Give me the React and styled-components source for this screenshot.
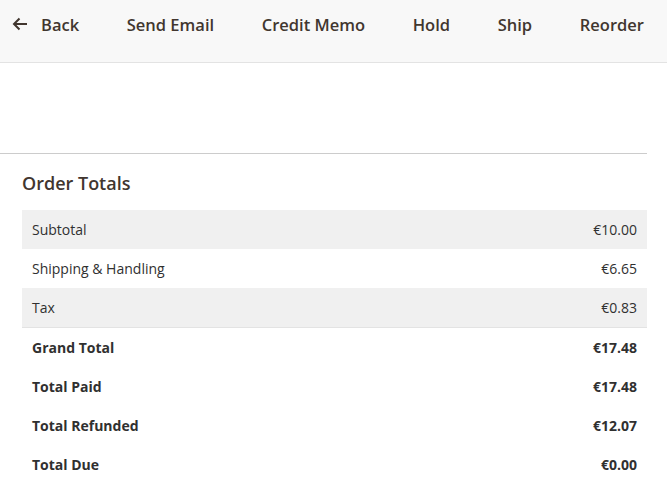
import React from "react"
import styled, { createGlobalStyle } from "styled-components"

const GlobalStyle = createGlobalStyle`
  body {
    margin: 0;
    background: #fff;
    font-family: "Open Sans", "Noto Sans", sans-serif;
    color: #41362f;
  }
`

const Toolbar = styled.nav`
  display: flex;
  align-items: center;
  justify-content: space-between;
  height: 48px;
  padding: 0 23px 14px 12px;
  background: #f8f8f8;
  border-bottom: 1px solid #e3e3e3;
`

const ToolButton = styled.span`
  display: flex;
  align-items: center;
  gap: 13px;
  font-size: 16.5px;
  font-weight: 600;
  color: #41362f;
  cursor: pointer;
  white-space: nowrap;
`

const Content = styled.main`
  padding-top: 90px;
`

const Section = styled.section`
  margin-right: 20px;
  border-top: 1px solid #cccccc;
`

const Title = styled.h2`
  margin: 18px 0 16px 22px;
  font-size: 18px;
  line-height: 22px;
  font-weight: 600;
  color: #41362f;
`

const Totals = styled.div`
  margin-left: 22px;
  display: flex;
  flex-direction: column;
`

const Row = styled.div`
  display: flex;
  align-items: center;
  justify-content: space-between;
  height: 39px;
  padding: 0 10px;
  font-size: 14px;
  font-weight: ${p => (p.$bold ? 700 : 400)};
  color: #303030;
  background: ${p => (p.$striped ? "#f0f0f0" : "transparent")};
  border-bottom: ${p => (p.$divider ? "1px solid #e3e3e3" : "none")};
`

const actions = ["Send Email", "Credit Memo", "Hold", "Ship", "Reorder"]

const lines = [
  { label: "Subtotal", value: "€10.00" },
  { label: "Shipping & Handling", value: "€6.65" },
  { label: "Tax", value: "€0.83" },
]

const totals = [
  { label: "Grand Total", value: "€17.48" },
  { label: "Total Paid", value: "€17.48" },
  { label: "Total Refunded", value: "€12.07" },
  { label: "Total Due", value: "€0.00" },
]

const ArrowLeft = () => (
  <svg width="16" height="14" viewBox="0 0 16 14" fill="none">
    <path
      d="M15 7H2M7.5 1.5 2 7l5.5 5.5"
      stroke="#41362f"
      strokeWidth="2"
      strokeLinecap="butt"
    />
  </svg>
)

export default function App() {
  return (
    <>
      <GlobalStyle />
      <Toolbar>
        <ToolButton>
          <ArrowLeft />
          Back
        </ToolButton>
        {actions.map(a => (
          <ToolButton key={a}>{a}</ToolButton>
        ))}
      </Toolbar>
      <Content>
        <Section>
          <Title>Order Totals</Title>
          <Totals>
            {lines.map((l, i) => (
              <Row
                key={l.label}
                $striped={i % 2 === 0}
                $divider={i === lines.length - 1}
              >
                <span>{l.label}</span>
                <span>{l.value}</span>
              </Row>
            ))}
            {totals.map(t => (
              <Row key={t.label} $bold>
                <span>{t.label}</span>
                <span>{t.value}</span>
              </Row>
            ))}
          </Totals>
        </Section>
      </Content>
    </>
  )
}
